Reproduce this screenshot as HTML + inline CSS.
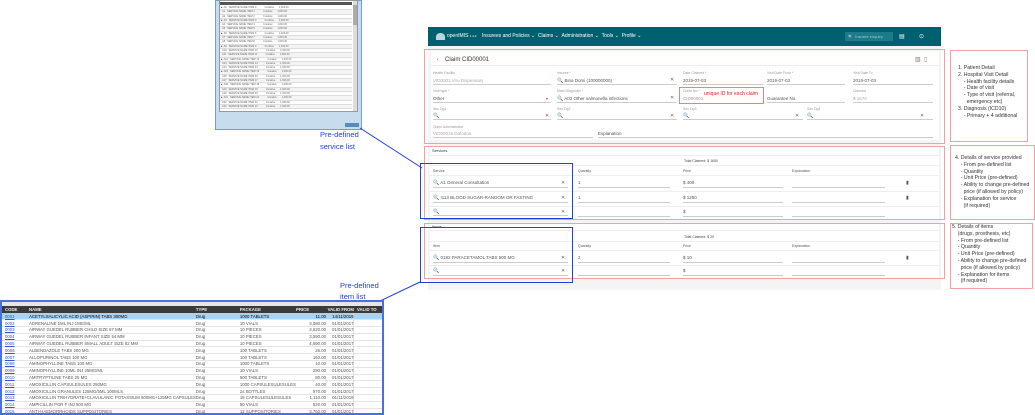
<!DOCTYPE html><html><head><style>
*{margin:0;padding:0;box-sizing:border-box}
body{width:1035px;height:415px;background:#fff;position:relative;overflow:hidden;font-family:"Liberation Sans",sans-serif}
.a{position:absolute;white-space:nowrap}
.l{font-size:3.5px;color:#999}
.v{font-size:4.5px;color:#555}
.u{position:absolute;height:1px;background:#ccc}
.pk{position:absolute;border:1px solid #f4a0a0}
.n{position:absolute;font-size:5.2px;line-height:6.8px;color:#333;white-space:pre}
.q{font-size:5px;color:#1a6b8c}
.x{font-size:5px;color:#666}
table{border-collapse:collapse}
</style></head><body>

<div class="a" style="left:215px;top:0;width:147px;height:130px;background:#c7dced;border:1px solid #6f9fd0"></div>
<div class="a" style="left:219px;top:0;width:139px;height:112px;background:#fff;border:1px solid #999"></div>
<div class="a" style="left:220px;top:2px;width:132px;height:3px;background:#555"></div>
<div class="a" style="left:353px;top:1px;width:4px;height:110px;background:#ddd"></div>
<div class="a" style="left:353px;top:5px;width:4px;height:20px;background:#aaa"></div>
<div id="sl" class="a" style="left:220px;top:6px;width:132px;height:105px;overflow:hidden"></div>
<div class="a" style="left:345px;top:123px;width:14px;height:4px;background:#5a8bbd"></div>
<div class="a" style="left:320px;top:129px;font-size:7.5px;color:#1f3fe0;line-height:12px">Pre-defined<br>service list</div>

<svg class="a" style="left:0;top:0" width="1035" height="415"><line x1="360" y1="128" x2="422" y2="168" stroke="#1f3fe0" stroke-width="1"/><line x1="420" y1="282" x2="380" y2="301" stroke="#1f3fe0" stroke-width="1"/></svg>
<div class="a" style="left:340px;top:280px;font-size:7.5px;color:#1f3fe0;line-height:11px">Pre-defined<br>item list</div>

<div class="a" style="left:0;top:300px;width:384px;height:115px;border:2px solid #4a6fe0;background:#fff;overflow:hidden">
<div style="height:4px;background:#e6e6e6"></div>
<table id="it" style="width:380px;font-size:4.3px;color:#555"></table>
</div>

<div class="a" style="left:428px;top:27px;width:513px;height:19px;background:#00606f"></div>
<div class="a" style="left:436px;top:33px;width:9px;height:7px;border-radius:50% 50% 0 0;background:#b8d6dc"></div>
<div class="a" style="left:447px;top:33px;font-size:5px;color:#fff">openIMIS <span style="font-size:3px">1.4.2</span> &nbsp; &nbsp;Insurees and Policies ⌄ &nbsp;Claims ⌄ &nbsp;Administration ⌄ &nbsp;Tools ⌄ &nbsp;Profile ⌄</div>
<div class="a" style="left:845px;top:32px;width:48px;height:9px;background:#1d7a88;font-size:4px;color:#9cc;padding:2px 3px">🔍&nbsp; Insuree enquiry</div>
<div class="a" style="left:899px;top:33px;font-size:6px;color:#fff">▤</div>
<div class="a" style="left:919px;top:33px;font-size:6px;color:#fff">⊙</div>
<div class="a" style="left:428px;top:46px;width:513px;height:244px;background:#f4f4f4"></div>

<div class="a" style="left:431px;top:51px;width:508px;height:89px;background:#fff"></div>
<div class="a" style="left:431px;top:65px;width:508px;height:1px;background:#eee"></div>
<div class="a" style="left:437px;top:57px;font-size:5px;color:#555">‹</div>
<div class="a" style="left:445px;top:57px;font-size:6px;color:#333">Claim CID00001</div>
<div class="a" style="left:915px;top:56px;font-size:6px;color:#777">▥ &nbsp;▯</div>

<div class="a l" style="left:433px;top:71px">Health Facility</div><div class="a v" style="left:433px;top:78px;color:#aaa">VID0001 Viru Dispensary</div><div class="u" style="left:433px;top:84px;width:118px"></div>
<div class="a l" style="left:557px;top:71px">Insuree *</div><div class="a v" style="left:557px;top:78px"><span class="q">🔍</span> Bina Domi (100000000)</div><div class="a x" style="left:670px;top:77px">✕</div><div class="u" style="left:557px;top:84px;width:120px"></div>
<div class="a l" style="left:683px;top:71px">Date Claimed *</div><div class="a v" style="left:683px;top:78px">2019-07-03</div><div class="u" style="left:683px;top:84px;width:80px"></div>
<div class="a l" style="left:767px;top:71px">Visit Date From *</div><div class="a v" style="left:767px;top:78px">2019-07-03</div><div class="u" style="left:767px;top:84px;width:78px"></div>
<div class="a l" style="left:853px;top:71px">Visit Date To</div><div class="a v" style="left:853px;top:78px">2019-07-03</div><div class="u" style="left:853px;top:84px;width:80px"></div>

<div class="a l" style="left:433px;top:89px">Visit type *</div><div class="a v" style="left:433px;top:96px">Other</div><div class="a x" style="left:546px;top:96px;font-size:4px">▾</div><div class="u" style="left:433px;top:102px;width:118px"></div>
<div class="a l" style="left:557px;top:89px">Main Diagnosis *</div><div class="a v" style="left:557px;top:96px"><span class="q">🔍</span> A02 Other salmonella infections</div><div class="a x" style="left:670px;top:95px">✕</div><div class="u" style="left:557px;top:102px;width:120px"></div>
<div class="a" style="left:679px;top:87px;width:85px;height:17px;border:1px solid #f08080"></div>
<div class="a l" style="left:683px;top:89px">Claim No *</div><div class="a v" style="left:683px;top:96px;color:#999">CID00001</div><div class="a" style="left:704px;top:91px;font-size:5px;color:#e02020">unique ID for each claim</div>
<div class="a v" style="left:767px;top:96px">Guarantee No.</div><div class="u" style="left:767px;top:102px;width:78px"></div>
<div class="a l" style="left:853px;top:89px">Claimed</div><div class="a v" style="left:853px;top:96px;color:#aaa">$ 1670</div><div class="u" style="left:853px;top:102px;width:80px"></div>

<div class="a l" style="left:433px;top:107px">Sec Dg1</div><div class="a q" style="left:433px;top:113px">🔍</div><div class="a x" style="left:545px;top:113px">✕</div><div class="u" style="left:433px;top:119px;width:118px"></div>
<div class="a l" style="left:557px;top:107px">Sec Dg2</div><div class="a q" style="left:557px;top:113px">🔍</div><div class="a x" style="left:670px;top:113px">✕</div><div class="u" style="left:557px;top:119px;width:120px"></div>
<div class="a l" style="left:683px;top:107px">Sec Dg3</div><div class="a q" style="left:683px;top:113px">🔍</div><div class="a x" style="left:795px;top:113px">✕</div><div class="u" style="left:683px;top:119px;width:120px"></div>
<div class="a l" style="left:807px;top:107px">Sec Dg4</div><div class="a q" style="left:807px;top:113px">🔍</div><div class="a x" style="left:920px;top:113px">✕</div><div class="u" style="left:807px;top:119px;width:126px"></div>
<div class="a l" style="left:433px;top:125px">Claim Administrator</div><div class="a v" style="left:433px;top:131px;color:#aaa">VID00015 Dafodou</div><div class="u" style="left:433px;top:137px;width:160px"></div>
<div class="a v" style="left:598px;top:131px">Explanation</div><div class="u" style="left:598px;top:137px;width:335px"></div>

<div class="a" style="left:430px;top:146px;width:509px;height:73px;background:#fff"></div>
<div class="a" style="left:432px;top:148px;font-size:4px;color:#333">Services</div>
<div class="a" style="left:430px;top:155px;width:509px;height:1px;background:#eee"></div>
<div class="a" style="left:684px;top:159px;font-size:3.5px;color:#444">Total Claimed: $ 1650</div>
<div class="a" style="left:430px;top:165px;width:509px;height:1px;background:#eee"></div>
<div class="a l" style="left:433px;top:169px;color:#555">Service</div><div class="a l" style="left:578px;top:169px;color:#555">Quantity</div><div class="a l" style="left:683px;top:169px;color:#555">Price</div><div class="a l" style="left:792px;top:169px;color:#555">Explanation</div>
<div class="a" style="left:430px;top:175px;width:509px;height:1px;background:#eee"></div>
<div class="a v" style="left:433px;top:180px"><span class="q">🔍</span> A1 General Consultation</div><div class="a x" style="left:561px;top:180px">✕</div><div class="u" style="left:433px;top:187px;width:135px"></div>
<div class="a v" style="left:578px;top:180px">1</div><div class="u" style="left:578px;top:187px;width:92px"></div>
<div class="a v" style="left:683px;top:180px">$ 400</div><div class="u" style="left:683px;top:187px;width:100px"></div>
<div class="u" style="left:792px;top:187px;width:93px"></div><div class="a" style="left:906px;top:180px;font-size:5px;color:#555">▮</div>
<div class="a" style="left:430px;top:191px;width:509px;height:1px;background:#eee"></div>
<div class="a v" style="left:433px;top:195px"><span class="q">🔍</span> I113 BLOOD SUGAR-RANDOM OR FASTING</div><div class="a x" style="left:561px;top:195px">✕</div><div class="u" style="left:433px;top:202px;width:135px"></div>
<div class="a v" style="left:578px;top:195px">1</div><div class="u" style="left:578px;top:202px;width:92px"></div>
<div class="a v" style="left:683px;top:195px">$ 1250</div><div class="u" style="left:683px;top:202px;width:100px"></div>
<div class="u" style="left:792px;top:202px;width:93px"></div><div class="a" style="left:906px;top:195px;font-size:5px;color:#555">▮</div>
<div class="a" style="left:430px;top:206px;width:509px;height:1px;background:#eee"></div>
<div class="a q" style="left:433px;top:209px">🔍</div><div class="a x" style="left:561px;top:209px">✕</div><div class="u" style="left:433px;top:215px;width:135px"></div>
<div class="u" style="left:578px;top:216px;width:92px"></div><div class="a v" style="left:683px;top:209px">$</div><div class="u" style="left:683px;top:216px;width:100px"></div><div class="u" style="left:792px;top:216px;width:93px"></div>

<div class="a" style="left:430px;top:223px;width:509px;height:55px;background:#fff"></div>
<div class="a" style="left:432px;top:224px;font-size:4px;color:#333">Items</div>
<div class="a" style="left:430px;top:230px;width:509px;height:1px;background:#eee"></div>
<div class="a" style="left:684px;top:235px;font-size:3.5px;color:#444">Total Claimed: $ 20</div>
<div class="a" style="left:430px;top:241px;width:509px;height:1px;background:#eee"></div>
<div class="a l" style="left:433px;top:244px;color:#555">Item</div><div class="a l" style="left:578px;top:244px;color:#555">Quantity</div><div class="a l" style="left:683px;top:244px;color:#555">Price</div><div class="a l" style="left:792px;top:244px;color:#555">Explanation</div>
<div class="a" style="left:430px;top:250px;width:509px;height:1px;background:#eee"></div>
<div class="a v" style="left:433px;top:255px"><span class="q">🔍</span> 0182 PARACETAMOL TABS 500 MG</div><div class="a x" style="left:561px;top:255px">✕</div><div class="u" style="left:433px;top:262px;width:135px"></div>
<div class="a v" style="left:578px;top:255px">2</div><div class="u" style="left:578px;top:262px;width:92px"></div>
<div class="a v" style="left:683px;top:255px">$ 10</div><div class="u" style="left:683px;top:262px;width:100px"></div>
<div class="u" style="left:792px;top:262px;width:93px"></div><div class="a" style="left:906px;top:255px;font-size:5px;color:#555">▮</div>
<div class="a" style="left:430px;top:265px;width:509px;height:1px;background:#eee"></div>
<div class="a q" style="left:433px;top:268px">🔍</div><div class="a x" style="left:561px;top:268px">✕</div><div class="u" style="left:433px;top:275px;width:135px"></div>
<div class="u" style="left:578px;top:275px;width:92px"></div><div class="a v" style="left:683px;top:268px">$</div><div class="u" style="left:683px;top:275px;width:100px"></div><div class="u" style="left:792px;top:275px;width:93px"></div>

<div class="pk" style="left:424px;top:49px;width:521px;height:95px"></div>
<div class="pk" style="left:424px;top:146px;width:521px;height:74px"></div>
<div class="pk" style="left:424px;top:223px;width:521px;height:56px"></div>
<div class="a" style="left:420px;top:163px;width:153px;height:56px;border:1.5px solid #1f3fe0"></div>
<div class="a" style="left:420px;top:227px;width:153px;height:56px;border:1.5px solid #1f3fe0"></div>

<div class="pk" style="left:950px;top:50px;width:78px;height:92px"></div>
<div class="n" style="left:958px;top:65px">1. Patient Detail
2. Hospital Visit Detail
    - Health facility details
    - Date of visit
    - Type of visit (referral,
      emergency etc)
3. Diagnosis (ICD10)
    - Primary + 4 additional</div>
<div class="pk" style="left:950px;top:145px;width:85px;height:75px"></div>
<div class="n" style="left:955px;top:155px">4. Details of service provided
    - From pre-defined list
    - Quantity
    - Unit Price (pre-defined)
    - Ability to change pre-defined
      price (if allowed by policy)
    - Explanation for service
      (if required)</div>
<div class="pk" style="left:950px;top:223px;width:83px;height:66px"></div>
<div class="n" style="left:952px;top:224px">5. Details of items
    (drugs, prosthesis, etc)
    - From pre-defined list
    - Quantity
    - Unit Price (pre-defined)
    - Ability to change pre-defined
      price (if allowed by policy)
    - Explanation for items
      (if required)</div>

<script>
var R=[["0001","ACETYLSALICYLIC ACID (ASPIRIN) TABS 300MG","1000 TABLETS","11.00","14/11/2019"],["0002","ADRENALINE 1ML INJ 1MG/ML","10 VIALS","3,080.00","01/01/2017"],["0003","AIRWAY GUEDEL RUBBER CHILD SIZE 67 MM","10 PIECES","3,620.00","01/01/2017"],["0004","AIRWAY GUEDEL RUBBER INFANT SIZE 54 MM","10 PIECES","3,590.00","01/01/2017"],["0005","AIRWAY GUEDEL RUBBER SMALL ADULT SIZE 82 MM","10 PIECES","4,590.00","01/01/2017"],["0006","ALBENDAZOLE TABS 200 MG","100 TABLETS","25.00","01/01/2017"],["0007","ALLOPURINOL TABS 100 MG","100 TABLETS","160.00","01/01/2017"],["0008","AMINOPHYLLINE TABS 100 MG","1000 TABLETS","10.00","01/01/2017"],["0009","AMINOPHYLLINE 10ML INJ 25MG/ML","10 VIALS","290.00","01/01/2017"],["0010","AMITRYPTILINE TABS 25 MG","500 TABLETS","80.00","01/01/2017"],["0011","AMOXICILLIN CAPSULESULES 250MG","1000 CAPSULESULESULES","40.00","01/01/2017"],["0012","AMOXICILLIN GRANULES 125MG/5ML 100MLS","24 BOTTLES","970.00","01/01/2017"],["0013","AMOXICILLIN TRIHYDRATE+CLAVULANIC POTASSIUM 500MG+125MG CAPSULES","15 CAPSULESULESULES","1,110.00","01/11/2019"],["0014","AMPICILLIN POR F INJ 500 MG","50 VIALS","520.00","01/01/2017"],["0015","ANTI-HAEMORRHOIDS SUPPOSITORIES","12 SUPPOSITORIES","3,760.00","01/01/2017"]];
var h='<tr style="background:#3a3a3a;color:#eee;height:7px;font-weight:bold"><td style="width:27px;padding-left:3px">CODE</td><td style="width:166px">NAME</td><td style="width:44px">TYPE</td><td style="width:52px">PACKAGE</td><td style="width:30px">PRICE</td><td style="width:28px;text-align:right">VALID FROM</td><td style="padding-left:3px">VALID TO</td></tr>';
R.forEach(function(r,i){h+='<tr style="height:6.8px;border-bottom:1px solid #e4e4e4;'+(i==0?'background:#a9d3f5;color:#000':'')+'"><td style="padding-left:3px;text-decoration:underline;color:#35c">'+r[0]+'</td><td>'+r[1]+'</td><td>Drug</td><td>'+r[2]+'</td><td style="text-align:right">'+r[3]+'</td><td style="text-align:right">'+r[4]+'</td><td style="border-left:1px solid #ddd"></td></tr>'});
document.getElementById('it').innerHTML=h;
var s='';for(var i=0;i<24;i++){s+='<div style="height:4.3px;border-bottom:1px solid #ddd;font-size:2.5px;color:#666;white-space:nowrap;overflow:hidden;background:'+(i%2?'#f4f4f4':'#fff')+'">&nbsp;'+(i%3?'':'■')+' &nbsp;A'+i+' &nbsp; SERVICE NAME ITEM '+i+' &nbsp; &nbsp; &nbsp; &nbsp; &nbsp; &nbsp;Curative &nbsp; &nbsp; &nbsp; 1,000.00</div>'}
document.getElementById('sl').innerHTML=s;
</script>
</body></html>
